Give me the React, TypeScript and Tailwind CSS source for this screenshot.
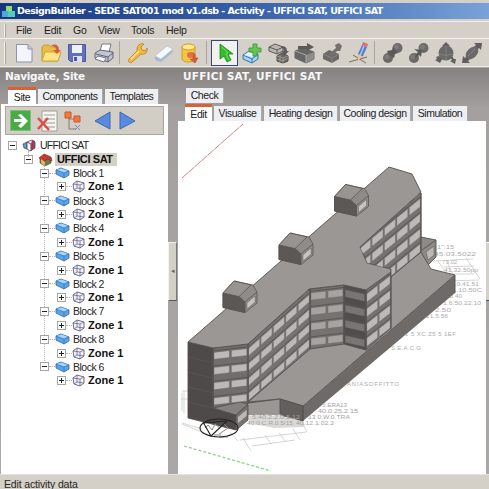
import React from 'react';

type Pt = [number, number];
const pts = (p: Pt[]) => p.map((a) => a.join(',')).join(' ');

function Svg({ children, w = 22, h = 22 }: { children: React.ReactNode; w?: number; h?: number }) {
  return <svg width={w} height={h} viewBox={`0 0 ${w} ${h}`} className="block shrink-0">{children}</svg>;
}

const NewIcon = () => (
  <Svg>
    <path d="M3.500 2.500H15l4 4V20H3.500Z" fill="#f3f4fc" stroke="#8e90b5" />
    <path d="M15 2.500V7h4" fill="#c9cce6" stroke="#8e90b5" />
  </Svg>
);
const OpenIcon = () => (
  <Svg>
    <path d="M2 19V5l2-2h5l2 2h7v14Z" fill="#e9bd45" stroke="#c59a37" />
    <path d="M2 19 5 10h16l-3 9Z" fill="#ffe681" stroke="#cda442" />
    <path d="M11 4c4-3 8-1 8 4h2l-4 4-4-4h3c0-3-2-4-5-4" fill="#d95b42" />
  </Svg>
);
const SaveIcon = () => (
  <Svg>
    <path d="M2.500 2.500h17v17h-15l-2-2Z" fill="#6371bb" stroke="#4c589f" />
    <path d="M6 3h10v8H6Z" fill="#eef1fc" />
    <path d="M7 14h9v6H7Z" fill="#dbe2f5" />
    <path d="M8 15h3v4H8Z" fill="#4c589f" />
  </Svg>
);
const PrintIcon = () => (
  <Svg>
    <path d="m7 9 2-7h9l-2 8Z" fill="#fff" stroke="#73758d" />
    <path d="m2 11 5-3 13 2v6l-5 4-13-4Z" fill="#c2c4d3" stroke="#606178" />
    <path d="m3 12 12 3 5-4M15 15v5" fill="none" stroke="#5f6077" />
    <path d="m5 14 8 2-2 4-9-3Z" fill="#f7f7fb" stroke="#73758d" />
  </Svg>
);
const WrenchIcon = () => (
  <Svg>
    <path d="M13 3c2-2 4-1 5-1l-3 3 1 3 3 1 2-3c1 4-2 7-6 6L6 20c-2 2-5-1-3-3l8-8c0-3 0-4 2-6Z" fill="#f2b940" stroke="#c98b29" />
    <path d="m5 17 8-8" stroke="#ffe594" strokeWidth="1.500" />
  </Svg>
);
const EraserIcon = () => (
  <Svg>
    <path d="M2 14 14 4l6 3-1 4L8 20l-6-2Z" fill="#a7b7d2" />
    <path d="M2 14 14 4l6 3L8 17Z" fill="#f6f9ff" stroke="#b7c2d7" strokeWidth=".7" />
  </Svg>
);
const DbIcon = () => (
  <Svg>
    <path d="M3 5v12c1 4 12 4 13 0V5" fill="#f4c73f" stroke="#cf9c2d" />
    <ellipse cx="9.500" cy="5" rx="6.500" ry="3" fill="#ffe98c" stroke="#cf9c2d" />
    <path d="M11 11c4-1 6 1 5 5h3l-3 5-5-4h3c0-2-1-3-3-3Z" fill="#d45b3c" stroke="#b74b32" strokeWidth=".6" />
    <circle cx="11" cy="13" r="3" fill="#df704a" />
  </Svg>
);
const PointerIcon = () => (
  <Svg>
    <path d="M6 2v15l4-3 3 6 4-2-3-6h5Z" fill="#36bc2c" stroke="#18831b" strokeWidth=".8" />
    <path d="m8 5 6 6-2 1 3 6" fill="none" stroke="#71df56" />
  </Svg>
);
const AddBlockIcon = () => (
  <Svg>
    <path d="m2 13 6-4 9 3v5l-6 4-9-4Z" fill="#a2d3f5" stroke="#3f76ae" />
    <path d="m2 13 9 4 6-5M11 17v4" fill="none" stroke="#3f76ae" />
    <path d="m3 13 5-3 7 2-4 3Z" fill="#e4f5ff" />
    <path d="M12 2h4v4h4v4h-4v4h-4v-4H8V6h4Z" fill="#64c650" stroke="#399235" strokeWidth=".8" />
  </Svg>
);
const CopyBlockIcon = () => (
  <Svg>
    <path d="m1 5 6-3 8 3v4L9 12 1 9Z" fill="#bbb8b3" stroke="#5c5a58" />
    <path d="m1 5 8 3 6-3M9 8v4" fill="none" stroke="#5c5a58" />
    <path d="M14 4c4 0 5 3 5 5h2l-4 4-4-4h3c0-2-1-3-3-3Z" fill="#5e5c5a" />
    <path d="m9 14 5-3 6 3v5l-5 2-6-2Z" fill="#6a6866" stroke="#4b4947" />
    <path d="m9 14 6 2 5-2M15 16v5m-3-8v7m-3-3 6 2 5-3" fill="none" stroke="#aaa7a2" strokeWidth=".7" />
  </Svg>
);
const StretchIcon = () => (
  <Svg>
    <path d="m1 9 8-3 11 4v7l-8 4-11-5Z" fill="#686664" stroke="#686664" />
    <path d="m12 13 8-3v7l-8 4Z" fill="#8e8b88" />
    <path d="m1 9 11 4v8" fill="none" stroke="#aaa7a3" />
    <path d="M4 4h9V1l7 4-7 4V7H4Z" fill="#5c5957" />
  </Svg>
);
const CutBlockIcon = () => (
  <Svg>
    <path d="m2 12 6-4 10 4v5l-7 4-9-4Z" fill="#6c6a67" />
    <path d="m2 12 9 4 7-4M11 16v5" fill="none" stroke="#888580" />
    <path d="m8 12 7-6-1-3 4-2 3 3-2 5h-3l-6 6Z" fill="#73706d" />
  </Svg>
);
const PencilIcon = () => (
  <Svg>
    <path d="m1 20 18-5M5 13l13 8M11 12v6" stroke="#796b62" />
    <path d="m10 12 4-9 5 2-4 9-5 4Z" fill="#577dca" />
    <path d="m14 3 1-3 5 2-1 3Z" fill="#e06d66" />
    <path d="m16 4-4 10" stroke="#a5c7fa" strokeWidth="1.500" />
    <path d="m10 12 1 1 1-1 1 2 2 0-5 5Z" fill="#ebc58c" />
  </Svg>
);
const LinkBallsIcon = ({ alt = false }: { alt?: boolean }) => (
  <Svg>
    <circle cx="15.500" cy="6" r="5" fill="#6b6967" />
    <circle cx="6" cy="16" r="5" fill="#6b6967" />
    <circle cx="14.500" cy="5" r="2.500" fill="#7d7a77" />
    <circle cx="5" cy="15" r="2.500" fill="#7d7a77" />
    <path d={alt ? 'm6 7 8 1-1 7-2-2-5 4 2-5 2-2Z' : 'm5 9 5-1 1-3 5 6-3 1-1 4-6-4Z'} fill="#5c5a58" />
  </Svg>
);
const OrbitIcon = () => (
  <Svg>
    <path d="m11 0 4 4h-2v3H9V4H7Zm10 17-1 5-5-3 2-1-2-3 2-1 2 3ZM1 15l3-1 2 2 2 0-3 5-5-3 2-1Z" fill="#62605e" />
    <circle cx="11" cy="11" r="7.500" fill="#6b6967" />
    <path d="M4 12q7 3 14 0M11 4v15" stroke="#898684" strokeWidth=".8" fill="none" />
  </Svg>
);
const FitIcon = () => (
  <Svg>
    <path d="m21 1-1 7-2-2-4 4-3-3 4-4-2-2ZM1 21l1-7 2 2 4-4 3 3-4 4 2 2Z" fill="#605e5c" />
    <ellipse cx="11" cy="11" rx="7.500" ry="5" transform="rotate(-45 11 11)" fill="#6b6967" />
    <path d="m7 14 7-7" stroke="#85827f" />
  </Svg>
);
const Separator = () => <div className="h-[23px] w-px bg-[#aaa59d]" />;

function Toolbar() {
  const cell = 'flex justify-center shrink-0';
  return (
    <div className="flex h-[28px] shrink-0 items-center border-t border-[#f5f3ef] bg-[#d5d1c9]">
      <div className="ml-[4px] mr-[7px] h-[22px] w-[2px] border-r border-[#aaa69e] bg-[#f4f2ee]" />
      <div className={`${cell} w-[22px]`}><NewIcon /></div>
      <div className={`${cell} ml-[5px] w-[22px]`}><OpenIcon /></div>
      <div className={`${cell} ml-[4px] w-[22px]`}><SaveIcon /></div>
      <div className={`${cell} ml-[5px] w-[22px]`}><PrintIcon /></div>
      <div className="ml-[4px]"><Separator /></div>
      <div className={`${cell} ml-[6px] w-[22px]`}><WrenchIcon /></div>
      <div className={`${cell} ml-[5px] w-[22px]`}><EraserIcon /></div>
      <div className={`${cell} ml-[4px] w-[22px]`}><DbIcon /></div>
      <div className="ml-[5px]"><Separator /></div>
      <div className="ml-[4px] flex h-[26px] w-[27px] shrink-0 items-center justify-center border border-[#34467b] bg-[#f1f1ef]"><PointerIcon /></div>
      <div className={`${cell} ml-[3px] w-[22px]`}><AddBlockIcon /></div>
      <div className={`${cell} ml-[5px] w-[22px]`}><CopyBlockIcon /></div>
      <div className={`${cell} ml-[4px] w-[22px]`}><StretchIcon /></div>
      <div className={`${cell} ml-[5px] w-[22px]`}><CutBlockIcon /></div>
      <div className={`${cell} ml-[5px] w-[22px]`}><PencilIcon /></div>
      <div className="ml-[4px]"><Separator /></div>
      <div className={`${cell} ml-[7px] w-[22px]`}><LinkBallsIcon /></div>
      <div className={`${cell} ml-[4px] w-[22px]`}><LinkBallsIcon alt /></div>
      <div className={`${cell} ml-[5px] w-[22px]`}><OrbitIcon /></div>
      <div className={`${cell} ml-[4px] w-[22px]`}><FitIcon /></div>
    </div>
  );
}

function Expander({ plus = false }: { plus?: boolean }) {
  return (
    <Svg w={9} h={9}>
      <rect x=".5" y=".5" width="8" height="8" fill="#fff" stroke="#a7a5a1" />
      <path d={plus ? 'M2 4.500h5M4.500 2v5' : 'M2 4.500h5'} stroke="#222" />
    </Svg>
  );
}
const BlockIcon = () => (
  <Svg w={15} h={12}>
    <path d="m1 3 5-2 8 3v4l-5 3-8-4Z" fill="#58a5e9" stroke="#3267a8" strokeWidth=".8" />
    <path d="m1.500 3 5-1.500L13 4 9 6Z" fill="#a6d6ff" />
    <path d="m1 3 8 3v5m0-5 5-2" fill="none" stroke="#3b76bb" strokeWidth=".8" />
  </Svg>
);
const ZoneIcon = () => (
  <Svg w={13} h={13}>
    <path d="m1 4 4-3 7 2v6l-4 3-6-2Z" fill="#f3f3fa" stroke="#5d5c82" strokeWidth=".9" />
    <path d="m1 4 7 1 4-2M8 5v7M5 1v7l7 1M2 10l3-2" fill="none" stroke="#68678c" strokeWidth=".8" />
  </Svg>
);
const SiteIcon = () => (
  <Svg w={15} h={13}>
    <path d="m1 5 4-2v7l-3-1Z" fill="#5e9bd7" stroke="#384873" strokeWidth=".7" />
    <path d="m5 3 5-2 3 2v6l-5 3-3-2Z" fill="#faf3f2" stroke="#664052" strokeWidth=".8" />
    <path d="m10 1 3 1v7l-4 3V5Z" fill="#963f54" />
    <path d="m5 3 4 2v7" fill="none" stroke="#6d5162" />
  </Svg>
);
const HouseIcon = () => (
  <Svg w={15} h={13}>
    <path d="m2 6 5-1 6 2v3l-6 3-5-3Z" fill="#66813e" stroke="#4b412b" strokeWidth=".6" />
    <path d="m1 5 5-4 7 3 1 4-5-2-3 3Z" fill="#c7372d" stroke="#843025" strokeWidth=".7" />
    <path d="m3 6 4 3v4L3 10Z" fill="#e9b26a" />
  </Svg>
);

const blocks = ['Block 1', 'Block 3', 'Block 4', 'Block 5', 'Block 2', 'Block 7', 'Block 8', 'Block 6'];

function Tree() {
  const dash = 'w-[6px] border-t border-dotted border-[#b7b5b1]';
  return (
    <div className="relative pt-[3.500px] text-[11px] leading-none text-[#252525]">
      <div className="absolute left-[27px] top-[16px] h-[6px] border-l border-dotted border-[#aaa]" />
      <div className="absolute left-[43px] top-[29px] h-[203px] border-l border-dotted border-[#b5b2ae]" />
      <div className="flex h-[13.850px] items-center pl-[7px]">
        <Expander /><div className="w-[5px]" /><SiteIcon />
        <span className="ml-[3px] whitespace-nowrap text-[10.500px] tracking-[-0.800px]">UFFICI SAT</span>
      </div>
      <div className="flex h-[13.850px] items-center pl-[23px]">
        <Expander /><div className="w-[5px]" /><HouseIcon />
        <span className="ml-[2px] flex h-[13px] w-[62px] items-center whitespace-nowrap bg-[#d4d0c8] pl-[2px] font-bold tracking-[-0.400px] text-[#111]">UFFICI SAT</span>
      </div>
      {blocks.map((b) => (
        <React.Fragment key={b}>
          <div className="relative flex h-[13.850px] items-center pl-[39px]">
            <Expander /><div className={dash} /><BlockIcon />
            <span className="ml-[3px] whitespace-nowrap text-[10.500px] tracking-[-0.500px]">{b}</span>
          </div>
          <div className="flex h-[13.850px] items-center pl-[56px]">
            <Expander plus /><div className={dash} /><ZoneIcon />
            <span className="ml-[3px] whitespace-nowrap font-bold text-[#111]">Zone 1</span>
          </div>
        </React.Fragment>
      ))}
    </div>
  );
}

function NavToolbar() {
  return (
    <div className="mx-[4px] mt-[2px] flex h-[29px] items-center border border-[#aaa59d] bg-[#d2cec6] pl-[4px]">
      <Svg>
        <rect x=".5" y=".5" width="20" height="20" fill="#46ac45" stroke="#85bb7f" />
        <path d="M4 9h8l-4-4 3-1 7 7-7 7-3-2 4-4H4Z" fill="#fff" />
      </Svg>
      <div className="w-[5px]" />
      <Svg>
        <path d="M5 1h15v20H5Z" fill="#f5f5f3" stroke="#a09e99" />
        <path d="M7 5h11M7 9h11M7 13h11M7 17h11" stroke="#9a9995" />
        <path d="m1 8 11 12M11 8 1 19" stroke="#df4d44" strokeWidth="2.500" />
      </Svg>
      <div className="w-[5px]" />
      <Svg>
        <path d="M5 6v13h7M5 9h7" fill="none" stroke="#827a74" />
        <path d="M1 2h6v6H1Zm9 4h6v6h-6Z" fill="#f0783f" stroke="#c9562d" />
        <path d="m11 15 5 5m0-5-5 5" stroke="#6c8fc4" />
      </Svg>
      <div className="w-[7px]" />
      <Svg><path d="M17 2v17L2 11Z" fill="#578be0" stroke="#3f67b3" /></Svg>
      <div className="w-[2px]" />
      <Svg><path d="M3 2v17l15-8Z" fill="#578be0" stroke="#3f67b3" /></Svg>
    </div>
  );
}

/* Parallelogram windows spread over the floors of one facade. */
function facade(a: Pt, b: Pt, count: number, floors: number, step: number, top: number, height: number, fill = '#bcbab8') {
  const at = (t: number, dy: number): Pt => [a[0] + (b[0] - a[0]) * t, a[1] + (b[1] - a[1]) * t + dy];
  const out: React.ReactNode[] = [];
  for (let f = 0; f < floors; f++) {
    const y = f * step;
    out.push(<polyline key={`l${f}`} points={pts([at(0, y + top - 1.600), at(1, y + top - 1.600)])} stroke="#565351" strokeWidth=".9" fill="none" />);
    for (let i = 0; i < count; i++) {
      const l = (i + 0.06) / count;
      const r = (i + 0.93) / count;
      out.push(<polygon key={`${f}-${i}`} points={pts([at(l, y + top), at(r, y + top), at(r, y + top + height), at(l, y + top + height)])} fill={fill} stroke="#6b6866" strokeWidth=".3" />);
    }
  }
  return <g>{out}</g>;
}

function Dormer({ x, y }: { x: number; y: number }) {
  return (
    <g transform={`translate(${x} ${y})`} stroke="#575452" strokeWidth=".8" strokeLinejoin="round">
      <path d="M0 12 11 0 30 4 34 11V22L22 31.500 0 26.500Z" fill="#8f8b88" />
      <path d="M0 12 16 15.500 22 21V31.500L0 26.500Z" fill="#5b5856" />
      <path d="M0 12 11 0 28 4 16 15.500Z" fill="#989491" />
      <path d="m22 21 12-10" fill="none" />
      <path d="m24 22 8-7v6l-8 7Z" fill="#c8c6c3" strokeWidth=".4" />
    </g>
  );
}

type Note = [number, number, number, string];
const rightNotes: Note[] = [
  [437, 249, 17, "1'':15"], [434, 256, 42, '45.03.5022'], [443, 264, 14, '/ 5.02'], [444, 272, 34, '41.32.50pp'],
  [450, 286, 29, 'S.0.41.51'], [452, 292, 30, '1.10.50C'], [446, 298, 16, '15.40'], [443, 305, 38, '1.6.50.22:10'],
  [435, 312, 16, '2.50'], [426, 318, 22, '21.5.56'],
];
const frontNotes: Note[] = [
  [322, 407, 25, '5.ERA13'], [318, 413, 40, '40.0.25.2.15'], [308, 419, 42, '13.0.W.0.TRA'], [252, 419, 48, '5.40.2.2.0.5.12'],
  [296, 425, 38, '40.12.1.02.2'], [247, 425, 46, '40.0.C.R.0.5/15'],
];

const Notes = ({ rows }: { rows: Note[] }) => (
  <>
    {rows.map(([x, y, w, s]) => <text key={s} x={x} y={y} textLength={w} lengthAdjust="spacingAndGlyphs">{s}</text>)}
  </>
);

function Model() {
  return (
    <svg width="308" height="353" viewBox="178 121 308 353" className="block">
      <path d="m182 178 61-54" stroke="#df7d84" strokeWidth="1" strokeDasharray="8 .6" />
      <path d="m184 446 87 25" stroke="#83d681" strokeWidth="1.300" strokeDasharray="3 2" />

      <g stroke="#cbcac9" strokeWidth=".8" fill="none">
        <path d="m433 261 40-2m-29 8 30-1m-34 8 34 0m-30 7 35-1M466 258l14 21M438 261l10 15M447 262l7 15" />
        <path d="M182 391h6m-7 8h7m-6 24 20 6m-20-5 25 10m31 7-8-9m21 19-8-13M240 440l66-8M252 446l43-6M265 435l6 9M279 433l7 9M293 429l7 11M303 424l4 8M184 391v22m-2-20v18" />
      </g>
      <g fontFamily="Liberation Sans, Arial, sans-serif" fontSize="6" fill="#adabaa">
        <Notes rows={rightNotes} />
        <text x="405" y="336" textLength="51">1 5 XC.Z5 5 1EF</text>
        <text x="391" y="350" textLength="30">S.E.A.C.G</text>
        <text x="347" y="386" textLength="52">ANIASOFFITTO</text>
      </g>

      <g stroke="#53504e" strokeWidth=".9" strokeLinejoin="round">
        <polygon points="415,242 421,237 436,240 436,257 426,267 415,263" fill="#8e8a87" />
        <path d="m422 250 14-10" fill="none" />
        <polygon points="426,252 434,246 434,255 428,260" fill="#bbb9b6" strokeWidth=".5" />
        <polygon points="248,402 280,399 303,406 455,275 455,293 303,421 280,415 248,415" fill="#6e6a68" stroke="none" />
        <polygon points="248,402 311,347 391,275 421,252 431,269 455,275 303,406 280,399" fill="#9b9795" />
        <polygon points="248,403 280,399 280,415 248,415" fill="#999694" stroke="none" />
        <polygon points="280,399 303,406 303,421 280,415" fill="#625f5d" />
        <path d="M303 406v15M455 275v18M248 403l32-4" fill="none" />

        <polygon points="360,247 421,193 421,252 391,277 367,263" fill="#757270" />
        <polygon points="366,290 391,271 391,328 366,350" fill="#757270" />
        <polygon points="310,289 344,285 344,344 310,349" fill="#757270" />
        <polygon points="344,285 366,290 366,350 344,344" fill="#504e4c" />
        <polygon points="248,344 310,289 310,349 248,402" fill="#757270" />
        <polygon points="213,348 248,344 248,404 236,415 213,408" fill="#706d6b" />
        <polygon points="188,342 213,348 213,408 236,415 236,430 188,418" fill="#4d4a49" />
        <polygon points="213,408 240,402 248,404 236,415" fill="#85817f" />
        <polygon points="236,415 248,405 248,420 236,430" fill="#777370" />
        <polygon points="237.500,417 247,409 247,416 237.500,424" fill="#bab8b5" strokeWidth=".5" />
        <path d="M188 357l25 6m-25 9 25 6m-25 9 25 6m-25 9 25 6" stroke="#5a5755" strokeWidth=".7" />
        <polygon points="188,342 389,167 412,174 421,192 360,247 367,263 391,269 391,272 366,290 344,285 309,289 248,344 213,348" fill="#9b9795" />
      </g>

      {facade([213, 348], [248, 344], 2, 4, 15.200, 4.500, 6.800)}
      {facade([248, 344], [310, 289], 5, 4, 14.900, 5, 7.300)}
      {facade([310, 289], [344, 285], 2, 4, 15.200, 4, 7, '#a6a3a1')}
      {facade([344, 285], [366, 290], 1, 4, 15.200, 4.500, 7, '#787573')}
      {facade([366, 290], [391, 270.500], 2, 4, 14.800, 4.500, 8)}
      <clipPath id="upper-facade"><polygon points="360.500,248 421,193 421,252 391,277 391,269 367.500,263" /></clipPath>
      <g clipPath="url(#upper-facade)">{facade([359, 244], [421, 193], 5, 5, 15.100, 5, 8)}</g>
      <path d="M213 348v59M248 344v59M310 289v60M344 285v59M366 290v60M391 269v60M421 193v59" stroke="#585553" strokeWidth=".8" fill="none" />

      <Dormer x={223} y={281} />
      <Dormer x={279} y={233} />
      <Dormer x={334.500} y={184.500} />

      <path d="M249 415l4 1 3-2 5 2 6-2 7 2 6-2 5 3 8 1 5 2 6 2v5l-30 1-25-5Z" fill="#c6c4c3" opacity=".65" />
      <g fontFamily="Liberation Sans, Arial, sans-serif" fontSize="6" fill="#a4a2a1"><Notes rows={frontNotes} /></g>
      <g fill="none" stroke="#252424" strokeWidth="1.100">
        <path d="m205 428 3-3 4 5 3-6 5 4 4-4 4 4-9 6m-5 1h7m-2 2h9" stroke="#8d8b8a" strokeWidth="1" />
        <ellipse cx="219" cy="428" rx="19" ry="9" />
        <path d="m203 422 8 14 16-15m-23 2 22-2" />
      </g>
    </svg>
  );
}

function Tab({ label, width, active = false }: { label: string; width: string; active?: boolean }) {
  return (
    <div className={`flex shrink-0 items-center justify-center whitespace-nowrap text-[10.500px] leading-none tracking-[-0.450px] text-[#222] ${width} ${active ? 'h-[17px] border-t-[3px] border-[#dc6036] bg-white' : 'h-[15px] border-r border-[#aaa9a9] bg-[#eeeff3]'}`}>
      {label}
    </div>
  );
}

export default function App() {
  return (
    <div className="flex h-[489px] w-[489px] flex-col overflow-hidden bg-[#d4d0c8] font-['Liberation_Sans',Arial,sans-serif]">
      <div className="mt-[3px] flex h-[16px] shrink-0 items-center bg-linear-to-r from-[#17377e] via-[#365fa7] to-[#79a2d8] pl-[2px]">
        <Svg w={13} h={13}>
          <path d="M4 1h6v6H4Z" fill="#94df6a" /><path d="M0 6h6v6H0Z" fill="#50a5df" /><path d="M6 6h7v6H6Z" fill="#55cdbd" />
        </Svg>
        <span className="ml-[2px] whitespace-nowrap font-['DejaVu_Sans',sans-serif] text-[9.500px] font-bold leading-none tracking-[-0.540px] text-white">DesignBuilder - SEDE SAT001 mod v1.dsb - Activity - UFFICI SAT, UFFICI SAT</span>
      </div>
      <div className="mt-[2px] flex h-[17px] shrink-0 items-center border-t border-[#f1eee9] pl-[4px] text-[10.500px] leading-none tracking-[-0.250px] text-[#1e1e1e]">
        <div className="h-[13px] w-[2px] border-r border-[#aaa69e] bg-[#f4f2ee]" />
        <span className="ml-[10px] w-[28px]">File</span><span className="w-[29px]">Edit</span><span className="w-[25px]">Go</span><span className="w-[33px]">View</span><span className="w-[35px]">Tools</span><span>Help</span>
      </div>
      <Toolbar />
      <div className="h-[2px] shrink-0 border-t border-[#f0eee9] bg-[#aaa7a2]" />
      <main className="flex h-[406px] shrink-0 bg-linear-to-b from-[#858280] via-[#a3a09f] via-10% to-[#aaa8a7]">
        <section className="flex w-[168px] shrink-0 flex-col pl-px">
          <h2 className="flex h-[17px] items-center pl-[4px] font-['DejaVu_Sans',sans-serif] text-[10.500px] font-bold leading-none tracking-[-0.300px] text-[#f7f7f7]">Navigate, Site</h2>
          <div className="flex h-[19px] items-end gap-[2px] pl-[7px]">
            <Tab label="Site" width="w-[28px]" active /><Tab label="Components" width="w-[65px]" /><Tab label="Templates" width="w-[54px]" />
          </div>
          <div className="min-h-0 flex-1 bg-white"><NavToolbar /><Tree /></div>
        </section>
        <div className="flex w-[10px] shrink-0 items-start pt-[174px]">
          <div className="flex h-[59px] w-[9px] items-center justify-center border border-[#f5f3ef] border-b-[#555] border-r-[#777] bg-[#d4d0c8] text-[7px] text-[#666]">◂</div>
        </div>
        <section className="flex w-[308px] shrink-0 flex-col">
          <h2 className="flex h-[17px] items-center whitespace-nowrap pl-[5px] font-['DejaVu_Sans',sans-serif] text-[10.500px] font-bold leading-none tracking-[0.230px] text-[#f7f7f7]">UFFICI SAT, UFFICI SAT</h2>
          <div className="flex h-[18px] items-end pl-[8px]"><Tab label="Check" width="w-[38px]" /></div>
          <div className="flex h-[18px] items-end gap-[2px] pl-[7px]">
            <Tab label="Edit" width="w-[27px]" active /><Tab label="Visualise" width="w-[48px]" /><Tab label="Heating design" width="w-[74px]" /><Tab label="Cooling design" width="w-[71px]" /><Tab label="Simulation" width="w-[55px]" />
          </div>
          <div className="min-h-0 flex-1 bg-white"><Model /></div>
        </section>
        <aside className="flex w-[3px] shrink-0 items-start pt-[174px]"><div className="h-[59px] w-full border-b border-t border-b-[#4c5267] border-t-white bg-[#d4d0c8]" /></aside>
      </main>
      <footer className="min-h-0 flex-1 overflow-hidden border-t border-[#e6e2dc] pl-[4px] pt-[4px] text-[10.500px] leading-none tracking-[-0.150px] text-[#252525]">Edit activity data</footer>
    </div>
  );
}
